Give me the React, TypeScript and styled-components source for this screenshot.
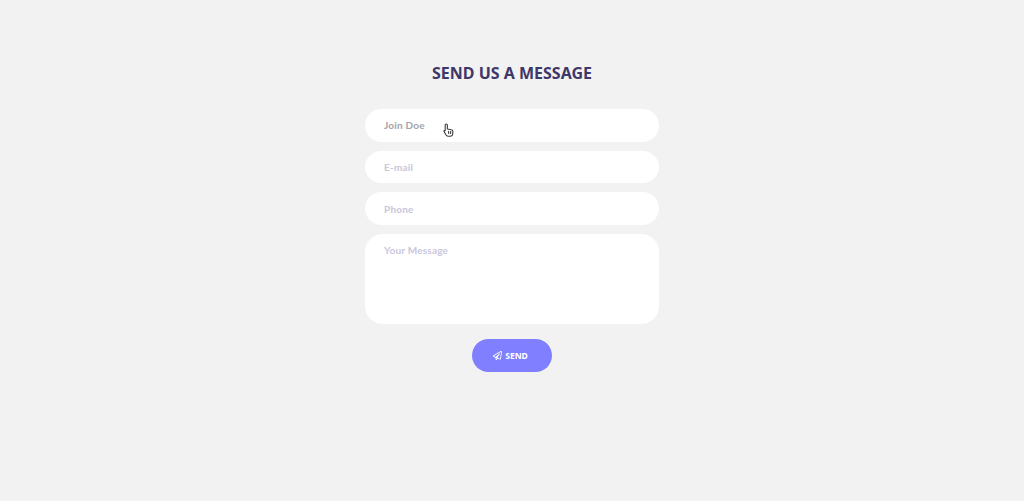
import { createGlobalStyle, styled } from 'styled-components'
import { FaRegPaperPlane } from 'react-icons/fa'

const GlobalStyle = createGlobalStyle`
  html, body {
    margin: 0;
    height: 100%;
    background: #f2f2f2;
  }
  body {
    font-family: "Noto Sans", "Open Sans", sans-serif;
  }
`

const Page = styled.main`
  width: 1024px;
  height: 501px;
  padding-top: 63px;
  box-sizing: border-box;
  overflow: hidden;
`

const ContactForm = styled.form`
  width: 294px;
  margin: 0 auto;
  display: flex;
  flex-direction: column;
  align-items: center;
`

const Title = styled.h2`
  width: 100%;
  margin: 0 0 25px;
  height: 21px;
  line-height: 21px;
  text-align: center;
  font-size: 16px;
  font-weight: 700;
  white-space: nowrap;
  color: #3f3768;
`

const Fields = styled.div`
  width: 100%;
  display: flex;
  flex-direction: column;
  gap: 9px;
`

const FieldWrap = styled.div`
  position: relative;
  width: 100%;
`

const TextInput = styled.input`
  display: block;
  width: 100%;
  height: 32.7px;
  box-sizing: border-box;
  padding: 0 19px;
  border: none;
  outline: none;
  border-radius: 17px;
  background: #fff;
  font-family: Lato, "Noto Sans", sans-serif;
  font-size: 10px;
  font-weight: 700;
  letter-spacing: 0.2px;
  color: #a3a3a8;

  &::placeholder {
    color: #c9c6dc;
    opacity: 1;
  }
`

const MessageInput = styled.textarea`
  display: block;
  width: 100%;
  height: 90px;
  box-sizing: border-box;
  padding: 10px 19px;
  border: none;
  outline: none;
  resize: none;
  border-radius: 18px;
  background: #fff;
  font-family: Lato, "Noto Sans", sans-serif;
  font-size: 10px;
  font-weight: 700;
  letter-spacing: 0.2px;

  &::placeholder {
    color: #c9c6dc;
    opacity: 1;
  }
`

const HandCursor = styled.svg`
  position: absolute;
  left: 78px;
  top: 14px;
  width: 12px;
  height: 14px;
  fill: #fff;
  stroke: #3a3a3a;
  stroke-width: 1;
  stroke-linejoin: round;
  stroke-linecap: round;
`

const SendButton = styled.button`
  margin-top: 15px;
  width: 80px;
  height: 33px;
  padding: 0 3px 0 0;
  display: flex;
  align-items: center;
  justify-content: center;
  gap: 3px;
  border: none;
  border-radius: 17px;
  background: #7f7fff;
  color: #fff;
  font-family: inherit;
  font-size: 8.5px;
  font-weight: 700;

  svg {
    width: 9px;
    height: 9px;
  }
`

export default function App() {
  return (
    <Page>
      <GlobalStyle />
      <ContactForm>
        <Title>SEND US A MESSAGE</Title>
        <Fields>
          <FieldWrap>
            <TextInput type="text" defaultValue="Join Doe" />
            <HandCursor viewBox="0 0 11 14" preserveAspectRatio="none">
              <path d="M3 1a1 1 0 0 1 1 1v4l3.5.7a1.6 1.6 0 0 1 1.5 1.6V10c0 2-1 3.3-2.5 3.3H5c-1 0-1.7-.6-2.2-1.4L.9 8.6c-.4-.8.5-1.4 1.1-.8V2a1 1 0 0 1 1-1z" />
              <path d="M5.2 8.2v2.4M7 8.4v2.2" />
            </HandCursor>
          </FieldWrap>
          <TextInput type="text" placeholder="E-mail" />
          <TextInput type="text" placeholder="Phone" />
          <MessageInput placeholder="Your Message" />
        </Fields>
        <SendButton type="button">
          <FaRegPaperPlane />
          SEND
        </SendButton>
      </ContactForm>
    </Page>
  )
}
